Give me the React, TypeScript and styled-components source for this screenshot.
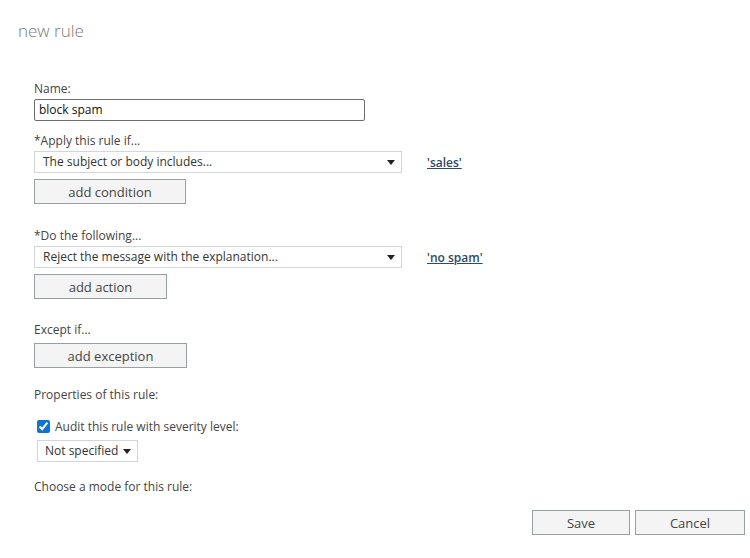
import React from 'react';
import styled, { createGlobalStyle } from 'styled-components';

const GlobalStyle = createGlobalStyle`
  html, body {
    margin: 0;
    padding: 0;
    background: #ffffff;
  }
  body {
    font-family: 'Open Sans', 'Noto Sans', 'Liberation Sans', sans-serif;
    font-size: 12px;
    color: #444444;
  }
`;

const Page = styled.div`
  width: 750px;
  height: 558px;
  box-sizing: border-box;
  padding: 19px 5px 0 18px;
  display: flex;
  flex-direction: column;
`;

const Title = styled.h1`
  margin: 0;
  font-size: 17px;
  font-weight: 300;
  line-height: 24px;
  color: #7a7a7a;
`;

const Form = styled.div`
  display: flex;
  flex-direction: column;
  align-items: flex-start;
  padding-left: 16px;
`;

const Label = styled.div<{ $mt: number }>`
  margin-top: ${(p) => p.$mt}px;
  line-height: 16px;
  height: 16px;
  color: #444444;
  white-space: nowrap;
`;

const TextInput = styled.div`
  margin-top: 2px;
  width: 331px;
  height: 22px;
  box-sizing: border-box;
  border: 1px solid #6d6d6d;
  border-radius: 2px;
  padding: 0 4px;
  line-height: 20px;
  color: #111111;
`;

const SelectRow = styled.div`
  margin-top: 2px;
  display: flex;
  align-items: center;
  gap: 25px;
`;

const Dropdown = styled.div<{ $w: number; $pl?: number }>`
  width: ${(p) => p.$w}px;
  height: 22px;
  box-sizing: border-box;
  border: 1px solid #d2d6da;
  padding: 0 6px 0 ${(p) => p.$pl ?? 8}px;
  display: flex;
  align-items: center;
  justify-content: space-between;
  color: #333333;
  line-height: 20px;
  white-space: nowrap;
`;

const Caret = styled.svg`
  width: 8px;
  height: 5px;
  flex: none;
`;

const ValueLink = styled.a`
  color: #2c4a69;
  font-weight: 600;
  text-decoration: underline;
  cursor: pointer;
`;

const Button = styled.button<{ $w: number; $mt: number }>`
  margin-top: ${(p) => p.$mt}px;
  width: ${(p) => p.$w}px;
  height: 25px;
  box-sizing: border-box;
  border: 1px solid #97a0a3;
  background: #f4f4f4;
  font-family: inherit;
  font-size: 13px;
  color: #444444;
  padding: 0;
  cursor: pointer;
`;

const CheckRow = styled.label`
  margin-top: 15px;
  margin-left: 3px;
  display: flex;
  align-items: center;
  gap: 5px;
  height: 16px;
  color: #444444;
`;

const Check = styled.input`
  margin: 0;
  width: 13px;
  height: 13px;
  accent-color: #0a74da;
`;

const SeverityWrap = styled.div`
  margin-top: 6px;
  margin-left: 3px;
`;

const Footer = styled.div`
  margin-top: 15px;
  display: flex;
  justify-content: flex-end;
  gap: 5px;
`;

const FooterButton = styled(Button)`
  margin-top: 0;
`;

const DownCaret = () => (
  <Caret viewBox="0 0 8 5">
    <path d="M0 0 L8 0 L4 5 Z" fill="#222" />
  </Caret>
);

export default function App() {
  return (
    <>
      <GlobalStyle />
      <Page>
        <Title>new rule</Title>
        <Form>
          <Label $mt={38}>Name:</Label>
          <TextInput>block spam</TextInput>

          <Label $mt={12}>*Apply this rule if...</Label>
          <SelectRow>
            <Dropdown $w={368}>
              The subject or body includes...
              <DownCaret />
            </Dropdown>
            <ValueLink>'sales'</ValueLink>
          </SelectRow>
          <Button $w={152} $mt={6}>add condition</Button>

          <Label $mt={24}>*Do the following...</Label>
          <SelectRow>
            <Dropdown $w={368}>
              Reject the message with the explanation...
              <DownCaret />
            </Dropdown>
            <ValueLink>'no spam'</ValueLink>
          </SelectRow>
          <Button $w={133} $mt={6}>add action</Button>

          <Label $mt={23}>Except if...</Label>
          <Button $w={153} $mt={5}>add exception</Button>

          <Label $mt={19}>Properties of this rule:</Label>
          <CheckRow>
            <Check type="checkbox" defaultChecked />
            Audit this rule with severity level:
          </CheckRow>
          <SeverityWrap>
            <Dropdown $w={101} $pl={7}>
              Not specified
              <DownCaret />
            </Dropdown>
          </SeverityWrap>

          <Label $mt={17}>Choose a mode for this rule:</Label>
        </Form>
        <Footer>
          <FooterButton $w={98} $mt={0}>Save</FooterButton>
          <FooterButton $w={110} $mt={0}>Cancel</FooterButton>
        </Footer>
      </Page>
    </>
  );
}
